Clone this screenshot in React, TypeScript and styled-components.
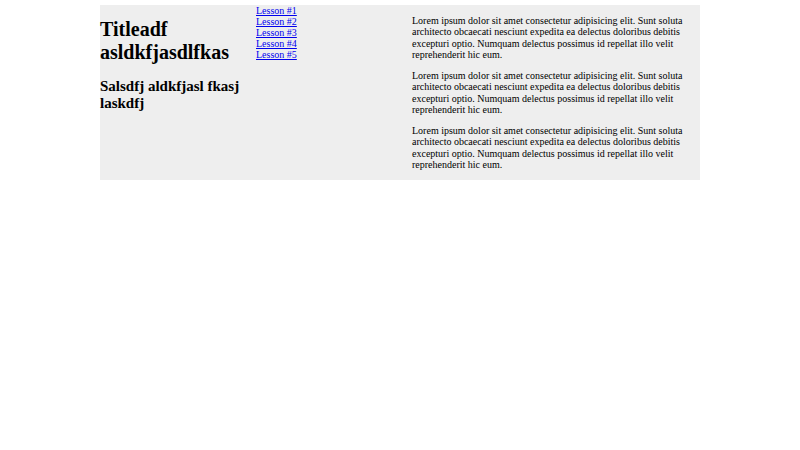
import styled, { createGlobalStyle } from 'styled-components';

const GlobalStyle = createGlobalStyle`
  html {
    font-size: 10px;
  }

  body {
    margin: 5px;
    font-family: 'Liberation Serif', 'Times New Roman', serif;
    font-size: 10px;
    color: #000;
    background: #fff;
  }
`;

const Wrapper = styled.div`
  display: grid;
  grid-template-columns: 156px 156px 1fr;
  width: 600px;
  margin: 0 auto;
  background-color: #eee;
`;

const Header = styled.header`
  display: block;
`;

const Title = styled.h1`
  font-size: 20px;
  font-weight: bold;
  margin: 13.4px 0;
`;

const Subtitle = styled.h2`
  font-size: 15px;
  font-weight: bold;
  margin: 12.45px 0;
`;

const LessonList = styled.ul`
  list-style: none;
  margin: 0;
  padding: 0;
  line-height: 11px;
`;

const LessonLink = styled.a`
  color: #0000ee;
  text-decoration: underline;
`;

const Content = styled.div`
  padding-right: 10px;
`;

const Paragraph = styled.p`
  margin: 10px 0;
  line-height: 11.25px;
`;

const lessons = ['Lesson #1', 'Lesson #2', 'Lesson #3', 'Lesson #4', 'Lesson #5'];

const lorem =
  'Lorem ipsum dolor sit amet consectetur adipisicing elit. Sunt soluta architecto obcaecati nesciunt expedita ea delectus doloribus debitis excepturi optio. Numquam delectus possimus id repellat illo velit reprehenderit hic eum.';

const App = () => {
  return (
    <>
      <GlobalStyle />
      <Wrapper>
        <Header>
          <Title>Titleadf asldkfjasdlfkas</Title>
          <Subtitle>Salsdfj aldkfjasl fkasj laskdfj</Subtitle>
        </Header>
        <nav>
          <LessonList>
            {lessons.map((lesson) => (
              <li key={lesson}>
                <LessonLink href="#">{lesson}</LessonLink>
              </li>
            ))}
          </LessonList>
        </nav>
        <Content>
          {[1, 2, 3].map((n) => (
            <Paragraph key={n}>{lorem}</Paragraph>
          ))}
        </Content>
      </Wrapper>
    </>
  );
};

export default App;
